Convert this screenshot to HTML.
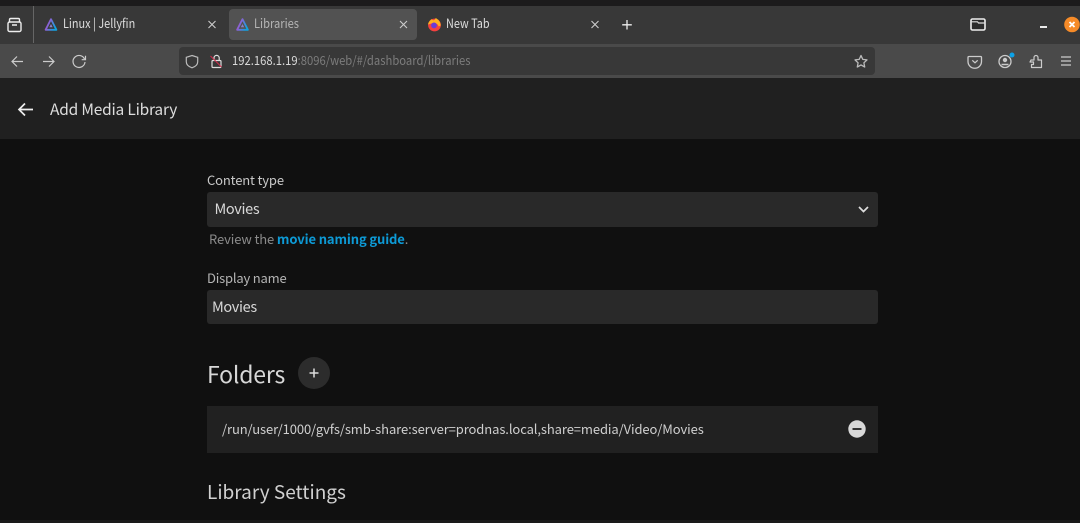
<!DOCTYPE html>
<html><head><meta charset="utf-8"><style>
html,body{margin:0;padding:0;background:#101010}
#r{position:relative;width:1080px;height:523px;overflow:hidden;background:#101010;font-family:"Noto Sans CJK JP","Liberation Sans",sans-serif}
#r div,#r svg{position:absolute}
.t{white-space:nowrap;line-height:1}
.ui{font-size:12.5px;color:#ddd;transform-origin:0 50%}
svg{overflow:visible}
</style></head><body><div id="r">
<div style="left:0;top:0;width:1080px;height:6px;background:#1c1b1c"></div>
<div style="left:0;top:6px;width:1080px;height:38px;background:#383838"></div>
<div style="left:0;top:44px;width:1080px;height:34px;background:#4a4a4a"></div>
<div style="left:0;top:78px;width:1080px;height:61px;background:#202020"></div>
<div style="left:0;top:520px;width:1080px;height:3px;background:#1a1a1a"></div>

<div style="left:229px;top:9px;width:188px;height:31px;background:#525252;border-radius:4px"></div>
<div style="left:179px;top:47px;width:696px;height:28px;background:#383838;border-radius:4px"></div>

<svg style="left:0;top:0" width="1080" height="78" fill="none">
<defs><linearGradient id="g" x1="0" y1="0.2" x2="1" y2="0.6"><stop offset="0.1" stop-color="#b04fd0"/><stop offset="0.95" stop-color="#12a2e0"/></linearGradient></defs>
<g stroke="#eee" stroke-width="1.4"><rect x="8" y="22" width="13" height="9.5" rx="1.5"/><path d="M9.5 22v-2.2a1.3 1.3 0 0 1 1.3-1.3h7.4a1.3 1.3 0 0 1 1.3 1.3V22M12 25h5"/></g>
<path d="M33.500 6v37" stroke="#666" stroke-width="1"/>
<path d="M51 19.200L56.400 29.800H45.600Z" stroke="url(#g)" stroke-width="1.800" stroke-linejoin="round"/>
<path d="M51 24l1.700 3.200h-3.400z" fill="#8a7fc8"/>
<path d="M242.500 19.200L247.900 29.800H237.100Z" stroke="url(#g)" stroke-width="1.800" stroke-linejoin="round"/>
<path d="M242.500 24l1.700 3.200h-3.400z" fill="#8a7fc8"/>
<path d="M208.500 21l7 7M215.500 21l-7 7M400 21l7 7M407 21l-7 7M591.500 21l7 7M598.500 21l-7 7" stroke="#ccc" stroke-width="1.100"/>
<path d="M627 20v9.500M622.200 24.800h9.600" stroke="#eee" stroke-width="1.300"/>
<circle cx="434.500" cy="25" r="6.400" fill="#f5403f"/>
<path d="M428 24.500c.6-3 2.500-4.500 4-5.500 0 1 1 1.300 2 1.200 1-.8 1.600-1.600 1.700-2.200 2.800 1.600 5 4 5 7.500l-2 1c-1-3-4-4.500-6.500-3.200z" fill="#ffb01f"/>
<circle cx="434" cy="25.400" r="2.900" fill="#6b3bd6"/>
<rect x="971" y="19" width="14" height="11" rx="1.500" fill="#2c2c2c" stroke="#eee" stroke-width="1.600"/>
<path d="M971 21.800h6.500l1 1.200h7" stroke="#ddd" stroke-width="1.200"/>
<path d="M1040 27h7" stroke="#fff" stroke-width="1.800"/>
<circle cx="1072" cy="24.500" r="7.800" fill="#f68b28"/>
<path d="M1069.500 22l5 5M1074.500 22l-5 5" stroke="#fff" stroke-width="1.800"/>
<path d="M23 61.500H12.500M17 56.500l-5 5 5 5M43 61.500h10.500M49 56.500l5 5-5 5" stroke="#ccc" stroke-width="1.200"/>
<path d="M84.500 59a6 6 0 1 0 .500 3M85.500 55.800v3.900h-3.800" stroke="#ccc" stroke-width="1.200"/>
<path d="M192 55.500l5.700 1.800v4.500c0 3-2.500 5-5.700 6-3.200-1-5.700-3-5.700-6v-4.500z" stroke="#bbb" stroke-width="1.200"/>
<rect x="212" y="60.500" width="9" height="7" rx="1" stroke="#ddd" stroke-width="1.200"/>
<path d="M214 60.500v-2.500a2.600 2.600 0 0 1 5.200 0v2.500" stroke="#ddd" stroke-width="1.200"/>
<path d="M210.500 56l11 11" stroke="#d8284a" stroke-width=".9"/>
<path d="M861 55.500l1.800 3.900 4.200.5-3.100 2.900.8 4.200-3.700-2.100-3.700 2.100.8-4.200-3.100-2.900 4.200-.5z" stroke="#bbb" stroke-width="1.300" stroke-linejoin="round"/>
<path d="M969 56.500h11.500a1 1 0 0 1 1 1v4a6.500 6.500 0 0 1-13.500 0v-4a1 1 0 0 1 1-1z" stroke="#ccc" stroke-width="1.300"/>
<path d="M972.300 60.300l2.700 2.500 2.700-2.500" stroke="#ccc" stroke-width="1.300"/>
<circle cx="1005" cy="61.500" r="6" stroke="#ccc" stroke-width="1.300"/>
<circle cx="1005" cy="60" r="2.200" fill="#ccc"/>
<path d="M1001.500 64.500h7" stroke="#ccc" stroke-width="1.500"/>
<circle cx="1012" cy="55" r="2.500" fill="#0ca2e8"/>
<path d="M1031 60h3v-2.500a2 2 0 0 1 4 0V60h3.500v7.500h-10v-3h2v-2.500h-3.500z" stroke="#ccc" stroke-width="1.200" stroke-linejoin="round"/>
<path d="M1061 57h10M1061 61h10M1061 65h10" stroke="#ccc" stroke-width="1.200"/>
<path d="M33 109.500H19M25 103.500l-6 6 6 6" stroke="#eee" stroke-width="1.700"/>
</svg>

<div class="t ui" style="left:63px;top:17px;transform:scaleX(.87)">Linux | Jellyfin</div>
<div class="t ui" style="left:254px;top:17px;color:#b5b5b5;transform:scaleX(.89)">Libraries</div>
<div class="t ui" style="left:446px;top:17px;transform:scaleX(.87)">New Tab</div>
<div class="t ui" style="left:232px;top:54px;color:#d8d8d8;transform:scaleX(.9)">192.168.1.19<span style="color:#7c7c7c">:8096/web/#/dashboard/libraries</span></div>
<div class="t" style="left:50px;top:102px;font-size:15.500px;color:#ddd;letter-spacing:-.2px">Add Media Library</div>

<div class="t" style="left:207px;top:173px;font-size:13px;color:#c8c8c8;letter-spacing:-.15px">Content type</div>
<div style="left:207px;top:192px;width:671px;height:35px;background:#292929;border-radius:3px"></div>
<div class="t" style="left:214.500px;top:202px;font-size:14.500px;color:#d8d8d8;letter-spacing:-.35px">Movies</div>
<svg style="left:858px;top:206px" width="11" height="8" fill="none"><path d="M1 1l4.500 4.500L10 1" stroke="#ddd" stroke-width="1.700"/></svg>
<div class="t" style="left:209px;top:232px;font-size:13px;color:#8a8a8a;letter-spacing:-.12px">Review the <b style="color:#0d9ad6;font-weight:700">movie naming guide</b>.</div>

<div class="t" style="left:207px;top:271px;font-size:13px;color:#b5b5b5;letter-spacing:-.2px">Display name</div>
<div style="left:207px;top:290px;width:671px;height:34px;background:#292929;border-radius:3px"></div>
<div class="t" style="left:212px;top:300px;font-size:14.500px;color:#d8d8d8;letter-spacing:-.35px">Movies</div>

<div class="t" style="left:207px;top:362px;font-size:23px;color:#d8d8d8;letter-spacing:-.2px">Folders</div>
<div style="left:298px;top:357px;width:32px;height:32px;border-radius:50%;background:#2c2c2c"></div>
<svg style="left:298px;top:357px" width="32" height="32" fill="none"><path d="M16 11.500v9M11.500 16h9" stroke="#ddd" stroke-width="1.500"/></svg>

<div style="left:207px;top:406px;width:671px;height:47px;background:#212121"></div>
<div class="t" style="left:222px;top:422px;font-size:13px;color:#cfcfcf;letter-spacing:-.1px">/run/user/1000/gvfs/smb-share:server=prodnas.local,share=media/Video/Movies</div>
<svg style="left:848px;top:420px" width="18" height="18"><circle cx="9" cy="9" r="8.700" fill="#d8d8d8"/><rect x="4.500" y="8" width="9" height="2" fill="#333"/></svg>

<div class="t" style="left:207px;top:482px;font-size:19px;color:#d0d0d0">Library Settings</div>
</div></body></html>
